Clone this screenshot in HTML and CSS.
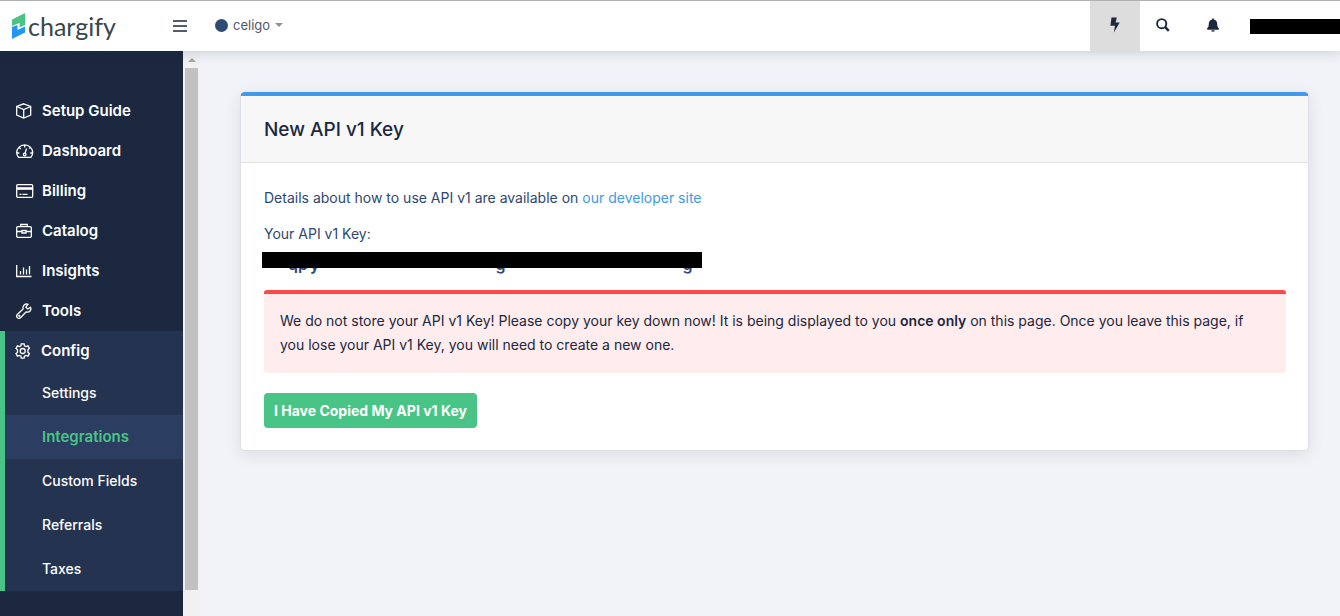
FILE: index.html
```html
<!DOCTYPE html>
<html lang="en">
<head>
    <meta charset="UTF-8">
    <meta name="viewport" content="width=device-width, initial-scale=1.0">
    <title>New API v1 Key</title>
    <link rel="stylesheet" href="styles.css">
</head>
<body>
    <!-- Top bar -->
    <header class="topbar">
        <a class="logo" href="#">
            <svg width="14" height="27" viewBox="0 0 14 27">
                <path d="M0 6.500 13 0V12L7.500 14.500V10L0 13Z" fill="#48c586"/>
                <path d="M0 14 5.500 12V17L13 13.500V19.500L0 26Z" fill="#2196f3"/>
            </svg>
            <span>chargify</span>
        </a>
        <button class="menu-toggle" aria-label="Toggle menu">
            <svg width="14" height="12" viewBox="0 0 14 12">
                <path d="M0 1h14M0 6h14M0 11h14" stroke="#1b283f" stroke-width="1.6"/>
            </svg>
        </button>
        <button class="site-picker">
            <span class="dot"></span>
            <span>celigo</span>
            <span class="caret"></span>
        </button>
        <nav class="actions">
            <button class="action active" aria-label="Quick actions">
                <svg width="10" height="16" viewBox="0 0 10 16">
                    <path d="M1.5 0.5h5.3L5.6 5.6h4.1L3.9 15.5 5 8.8H0.4Z" fill="#1b283f"/>
                </svg>
            </button>
            <button class="action" aria-label="Search">
                <svg width="14" height="14" viewBox="0 0 14 14" fill="none" stroke="#1b283f">
                    <circle cx="5.7" cy="5.7" r="4.6" stroke-width="1.9"/>
                    <path d="M9.2 9.2l3.6 3.6" stroke-width="2.4"/>
                </svg>
            </button>
            <button class="action" aria-label="Notifications">
                <svg width="12" height="14" viewBox="0 0 12 14" fill="#1b283f">
                    <path d="M5.2 1.6V1a.8.8 0 0 1 1.6 0v.6C9 2 10.2 3.7 10.2 5.8c0 2.7.7 3.6 1.5 4.4.6.7.2 1.5-.6 1.5H.9c-.8 0-1.200-.8-.6-1.500C1.100 9.400 1.800 8.500 1.800 5.800 1.800 3.700 3 2 5.200 1.600Z"/>
                    <path d="M4.300 12.300h3.400a1.700 1.500 0 0 1-3.400 0Z"/>
                </svg>
            </button>
            <span class="user"></span>
        </nav>
    </header>

    <div class="layout">
        <!-- Sidebar -->
        <nav class="sidebar">
            <a class="item" href="#">
                <svg width="18" height="16" viewBox="0 0 18 16">
                    <path d="M7.700.8 14.700 3.500V12L7.700 15 .7 12V3.500ZM.7 3.500 7.700 6.500 14.700 3.500M7.700 6.500V15"/>
                </svg>
                Setup Guide
            </a>
            <a class="item" href="#">
                <svg width="18" height="16" viewBox="0 0 18 16">
                    <path d="M2.500 14.300C1.300 13 .7 11.500.7 9.800a8 8 0 0 1 16 0c0 1.700-.6 3.200-1.800 4.500ZM8.700 2v2.500M3.200 4.500l1.500 1.500M14.200 4.500l-1 1M1 10h2.300M14.200 10h2.300M10.500 5.500 9 10.500"/>
                    <circle cx="8.700" cy="11.500" r="1.300"/>
                </svg>
                Dashboard
            </a>
            <a class="item" href="#">
                <svg width="18" height="16" viewBox="0 0 18 16">
                    <rect x=".7" y="1.700" width="16" height="12.600" rx="1"/>
                    <path d="M1 5.500h15.500" stroke-width="2.600"/>
                    <path d="M3.500 11.300h2M6.500 11.300h5"/>
                </svg>
                Billing
            </a>
            <a class="item" href="#">
                <svg width="18" height="16" viewBox="0 0 18 16">
                    <rect x=".7" y="3.700" width="14.600" height="10.600" rx="1"/>
                    <path d="M4.700 3.500V1.500h6.600v2M1 8.500h5M10 8.500h5M6 7.500h4v2.500H6Z"/>
                </svg>
                Catalog
            </a>
            <a class="item" href="#">
                <svg width="18" height="16" viewBox="0 0 18 16">
                    <path d="M.7 2v11.500H15.500M4.500 11.500V8M7.500 11.500V4.500M10.500 11.500V6.500M13.500 11.500V3"/>
                </svg>
                Insights
            </a>
            <a class="item" href="#">
                <svg width="18" height="16" viewBox="0 0 18 16">
                    <path d="M14.500 4.300 11.800 6 9.800 4.200 12 1.300C9.300.3 6.300 2.500 7.100 6L1.300 11.500c-2 2 1.200 5.200 3.200 3.200L10 9c3.500.8 5.800-1.800 4.500-4.700Z"/>
                    <circle cx="3.300" cy="12.800" r=".5"/>
                </svg>
                Tools
            </a>
            <div class="group">
                <a class="item" href="#">
                    <svg width="18" height="16" viewBox="0 0 18 16">
                        <path d="M6.300.8h2.800l.4 2 1.500.8 2-.7 1.400 2.400-1.500 1.400v2.600l1.500 1.400-1.400 2.400-2-.7-1.500.8-.4 2H6.300l-.4-2-1.500-.8-2 .7L1 10.700l1.500-1.400V6.700L1 5.300l1.400-2.400 2 .7 1.500-.8Z"/>
                        <circle cx="7.700" cy="8" r="2.500"/>
                    </svg>
                    Config
                </a>
                <a class="subitem" href="#">Settings</a>
                <a class="subitem current" href="#">Integrations</a>
                <a class="subitem" href="#">Custom Fields</a>
                <a class="subitem" href="#">Referrals</a>
                <a class="subitem" href="#">Taxes</a>
            </div>
        </nav>
        <div class="scrollbar">
            <span class="arrow-up"></span>
            <span class="thumb"></span>
        </div>

        <!-- Page content -->
        <main class="content">
            <section class="card">
                <h1>New API v1 Key</h1>
                <div class="card-body">
                    <p>Details about how to use API v1 are available on <a href="#">our developer site</a></p>
                    <p>Your API v1 Key:</p>
                    <div class="key"><span>qp</span><span>y</span><span>g</span><span>g</span></div>
                    <div class="alert">
                        We do not store your API v1 Key! Please copy your key down now! It is being displayed to you <strong>once only</strong> on this page. Once you leave this page, if you lose your API v1 Key, you will need to create a new one.
                    </div>
                    <button class="confirm">I Have Copied My API v1 Key</button>
                </div>
            </section>
        </main>
    </div>
</body>
</html>
```
FILE: styles.css
```css
* {
    box-sizing: border-box;
}
body {
    margin: 0;
    min-height: 100vh;
    display: flex;
    flex-direction: column;
    font-family: Inter, "Liberation Sans", sans-serif;
    font-size: 14px;
    line-height: 24px;
    color: #2f4770;
    background-color: #f2f3f8;
}
a {
    text-decoration: none;
}
button {
    font-family: inherit;
    border: 0;
    padding: 0;
    background: none;
    cursor: pointer;
}

/* Top bar */
.topbar {
    position: relative;
    display: flex;
    align-items: center;
    height: 51px;
    border-top: 1px solid #b1b1b1;
    background-color: #fff;
    box-shadow: 0 1px 12px rgba(27, 40, 63, 0.2);
}
.logo {
    display: flex;
    align-items: center;
    gap: 2px;
    width: 173px;
    padding-left: 12px;
    color: #37474f;
    font-family: Lato, sans-serif;
    font-size: 25px;
}
.menu-toggle {
    display: flex;
}
.site-picker {
    display: flex;
    align-items: center;
    gap: 5px;
    margin-left: 28px;
    padding-bottom: 2px;
    font-size: 13px;
    color: #4f5869;
}
.dot {
    width: 13px;
    height: 13px;
    border-radius: 50%;
    background-color: #2f4a75;
}
.caret {
    border: 4px solid transparent;
    border-top-color: #8b9099;
    border-bottom: 0;
}
.actions {
    display: flex;
    align-items: center;
    align-self: stretch;
    margin-left: auto;
}
.action {
    display: flex;
    align-items: center;
    justify-content: center;
    align-self: stretch;
    width: 50px;
    padding: 0 5px 2px 0;
}
.action.active {
    padding: 0 0 2px;
    background-color: #ddd;
}
.user {
    width: 90px;
    height: 15px;
    margin-left: 10px;
    background-color: #000;
}

.layout {
    display: flex;
    flex: 1;
}

/* Sidebar */
.sidebar {
    width: 183px;
    padding-top: 40px;
    background-color: #1b283f;
}
.item {
    display: flex;
    align-items: center;
    gap: 8px;
    height: 40px;
    padding-left: 16px;
    color: #fff;
    font-size: 15px;
    font-weight: 600;
}
.item svg {
    fill: none;
    stroke: #fff;
    stroke-width: 1.3;
}
.group {
    border-left: 5px solid #48c586;
    background-color: #243450;
}
.group .item {
    padding-left: 10px;
}
.subitem {
    display: block;
    padding-left: 37px;
    line-height: 44px;
    color: #fff;
    font-weight: 500;
}
.subitem.current {
    background-color: #2b3d60;
    color: #48c586;
    font-size: 15px;
    font-weight: 600;
}
.scrollbar {
    display: flex;
    flex-direction: column;
    width: 17px;
    padding: 0 2px 26px;
    background-color: #f1f1f1;
}
.arrow-up {
    align-self: center;
    margin: 7px 0 6px;
    border: 4px solid transparent;
    border-top: 0;
    border-bottom-color: #a3a3a3;
}
.thumb {
    flex: 1;
    background-color: #c1c1c1;
}

/* Card */
.content {
    flex: 1;
    padding: 41px 31px 40px 40px;
}
.card {
    border: 1px solid #dcdfe3;
    border-top: 4px solid #4299e9;
    border-radius: 5px;
    background-color: #fff;
    box-shadow: 0 4px 16px rgba(27, 40, 63, 0.1);
}
.card h1 {
    margin: 0;
    padding: 22px 23px 20px;
    border-bottom: 1px solid #e1e1e1;
    background-color: #f7f7f7;
    color: #1b283f;
    font-size: 19px;
    font-weight: 500;
}
.card-body {
    padding: 23px 22px 22px 23px;
}
.card-body p {
    margin: 0 0 12px;
}
.card-body p a {
    color: #4299e9;
}
.key {
    position: relative;
    display: flex;
    height: 20px;
    padding-left: 24px;
    font-size: 16px;
    font-weight: 600;
    line-height: 12px;
}
.key span:nth-child(2) {
    margin-left: 2px;
}
.key span:nth-child(3) {
    margin-left: 176px;
}
.key span:nth-child(4) {
    margin-left: 177px;
}
.key::after {
    content: "";
    position: absolute;
    left: -2px;
    top: -6px;
    width: 440px;
    height: 16px;
    background-color: #000;
}
.alert {
    margin: 12px 0 20px;
    padding: 15px 16px 16px;
    border-top: 4px solid #ff4949;
    border-radius: 3px;
    background-color: #ffecec;
    color: #1b283f;
}
.alert strong {
    font-weight: 600;
}
.confirm {
    display: block;
    height: 35px;
    padding: 0 10px;
    border-radius: 4px;
    background-color: #48c586;
    color: #fff;
    font-size: 14px;
    font-weight: 700;
}
```
